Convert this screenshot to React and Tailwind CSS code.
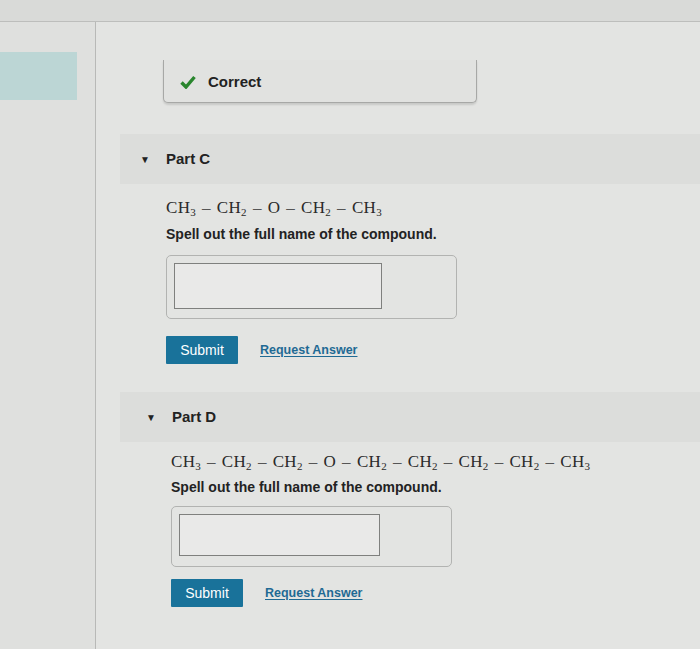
import React from 'react';

const sans = { fontFamily: '"Liberation Sans", Arial, sans-serif' };

// chain is a list of [group, subscript] pairs
const Formula = ({ chain }) => (
  <div className="font-['Liberation_Serif',serif] text-[17px] leading-[22px] text-[#2a2a2a] tracking-[0.3px]">
    {chain.map(([g, sub], i) => (
      <span key={i}>
        {i > 0 && <span className="mx-[6px] text-[#555]">–</span>}
        {g}
        {sub && <sub className="text-[11px]">{sub}</sub>}
      </span>
    ))}
  </div>
);

const PartHeader = ({ label, indent }) => (
  <div className={`flex items-center h-[50px] bg-[#dcdddb] ${indent}`}>
    <span className="text-[10px] text-[#222] w-[26px]">▼</span>
    <span className="text-[15px] font-semibold text-[#222]">{label}</span>
  </div>
);

const AnswerBlock = ({ boxW, boxH, inputW, inputH, gap, btnGap }) => (
  <>
    <div className={`${gap} ${boxW} ${boxH} rounded-[5px] border border-[#b2b3b1] bg-[#e3e4e2] p-[7px]`}>
      <div className={`${inputW} ${inputH} border border-[#7f807e] bg-[#e9e9e8]`} />
    </div>
    <div className={`${btnGap} flex items-center gap-[22px]`}>
      <button className="w-[72px] h-[28px] bg-[#19729a] text-white text-[14px] font-medium rounded-[1px]">
        Submit
      </button>
      <a href="#" className="text-[12.5px] font-bold text-[#1f6a94] underline underline-offset-2">
        Request Answer
      </a>
    </div>
  </>
);

const App = () => {
  return (
    <div style={sans} className="w-[700px] h-[649px] overflow-hidden bg-[#e3e4e2] flex flex-col">
      <div className="h-[22px] shrink-0 bg-[#d9dad8] border-b border-[#bdbebc]" />
      <div className="flex flex-1">
        {/* sidebar */}
        <aside className="w-[96px] shrink-0 border-r border-[#b8b9b7] bg-[#dfe0de] pt-[30px]">
          <div className="w-[77px] h-[48px] bg-[#bcd6d5]" />
        </aside>

        {/* content */}
        <main className="flex-1 pl-[24px] pb-[40px]">
          <div className="ml-[43px] w-[314px] h-[43px] mt-[38px] rounded-b-[5px] border border-t-0 border-[#a7a8a6] bg-[#e1e2e0] shadow-[0_2px_2px_rgba(0,0,0,0.12)] flex items-center pl-[16px] pt-[2px] gap-[12px]">
            <svg width="16" height="14" viewBox="0 0 16 14">
              <path d="M1.5 7.5 L6 12 L14.5 2" fill="none" stroke="#2a862e" strokeWidth="3.4" strokeLinejoin="miter" />
            </svg>
            <span className="text-[15px] font-semibold text-[#222]">Correct</span>
          </div>

          <div className="mt-[31px]">
            <PartHeader label="Part C" indent="pl-[20px]" />
            <div className="pl-[46px] pt-[13px]">
              <Formula chain={[['CH', '3'], ['CH', '2'], ['O'], ['CH', '2'], ['CH', '3']]} />
              <p className="mt-[5px] text-[14px] font-bold text-[#222]">Spell out the full name of the compound.</p>
              <AnswerBlock boxW="w-[291px]" boxH="h-[64px]" inputW="w-[208px]" inputH="h-[46px]" gap="mt-[10px]" btnGap="mt-[17px]" />
            </div>
          </div>

          <div className="mt-[28px]">
            <PartHeader label="Part D" indent="pl-[26px]" />
            <div className="pl-[51px] pt-[9px]">
              <Formula
                chain={[['CH', '3'], ['CH', '2'], ['CH', '2'], ['O'], ['CH', '2'], ['CH', '2'], ['CH', '2'], ['CH', '2'], ['CH', '3']]}
              />
              <p className="mt-[4px] text-[14px] font-bold text-[#222]">Spell out the full name of the compound.</p>
              <AnswerBlock boxW="w-[281px]" boxH="h-[61px]" inputW="w-[201px]" inputH="h-[42px]" gap="mt-[8px]" btnGap="mt-[12px]" />
            </div>
          </div>
        </main>
      </div>
    </div>
  );
};

export default App;
